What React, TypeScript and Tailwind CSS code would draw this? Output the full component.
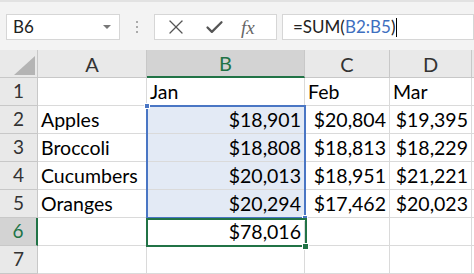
import { X, Check } from "lucide-react";

const cols = [
  { label: "A", w: "w-[109px]" },
  { label: "B", w: "w-[158px]", active: true },
  { label: "C", w: "w-[85px]" },
  { label: "D", w: "w-[82px]" },
  { label: "", w: "w-[10px]" },
];

const rows: { n: number; cells: string[] }[] = [
  { n: 1, cells: ["", "Jan", "Feb", "Mar", ""] },
  { n: 2, cells: ["Apples", "$18,901", "$20,804", "$19,395", ""] },
  { n: 3, cells: ["Broccoli", "$18,808", "$18,813", "$18,229", ""] },
  { n: 4, cells: ["Cucumbers", "$20,013", "$18,951", "$21,221", ""] },
  { n: 5, cells: ["Oranges", "$20,294", "$17,462", "$20,023", ""] },
  { n: 6, cells: ["", "$78,016", "", "", ""] },
  { n: 7, cells: ["", "", "", "", ""] },
];

function Cell({ text, w, selected }: { text: string; w: string; selected: boolean }) {
  const isNum = text.startsWith("$");
  return (
    <div
      className={`${w} h-[28px] shrink-0 border-r border-b border-[#dadada] flex items-center ${
        isNum ? "justify-end pr-[3px]" : "justify-start pl-[3px]"
      } ${selected ? "bg-[#e3eaf5]" : ""}`}
    >
      <span className="text-[19.5px] leading-[20px] text-black whitespace-nowrap">{text}</span>
    </div>
  );
}

export default function App() {
  return (
    <div
      className="w-[474px] h-[274px] overflow-hidden bg-[#f3f3f3] relative"
      style={{ fontFamily: "Lato, 'Open Sans', sans-serif" }}
    >
      {/* formula bar */}
      <div className="h-[50px] border-t-2 border-[#e2e2e2] flex items-start pt-[12px]">
        <div className="ml-[6px] w-[114px] h-[26px] bg-white border border-[#d6d6d6] flex items-center pl-[6px] pr-[8px] justify-between">
          <span className="text-[17px] text-[#222]">B6</span>
          <span className="w-0 h-0 border-l-[4px] border-r-[4px] border-t-[4px] border-l-transparent border-r-transparent border-t-[#777]" />
        </div>
        <div className="w-[34px] h-[26px] flex flex-col items-center justify-center gap-[3px]">
          <span className="w-[2px] h-[2px] bg-[#aaa]" />
          <span className="w-[2px] h-[2px] bg-[#aaa]" />
          <span className="w-[2px] h-[2px] bg-[#aaa]" />
        </div>
        <div className="w-[123px] h-[26px] bg-white border border-[#d6d6d6] flex items-center pl-[9px] gap-[16px]">
          <X size={24} strokeWidth={1.3} className="text-[#555]" />
          <Check size={21} strokeWidth={2.6} className="text-[#555]" />
          <span
            className="text-[19px] italic text-[#666] leading-none"
            style={{ fontFamily: "'Liberation Serif', serif" }}
          >
            fx
          </span>
        </div>
        <div className="ml-[5px] flex-1 h-[26px] bg-white border border-[#d6d6d6] flex items-center pl-[10px]">
          <span className="text-[17px] text-[#222]">=SUM(</span>
          <span className="text-[17px] text-[#3e6fc0]">B2:B5</span>
          <span className="text-[17px] text-[#222]">)</span>
          <span className="w-[1px] h-[19px] bg-black ml-[1px]" />
        </div>
      </div>

      {/* grid */}
      <div className="relative bg-white">
        <div className="flex h-[28px] bg-[#e9e9e9]">
          <div className="w-[38px] shrink-0 border-r border-b border-[#c8c8c8] relative">
            <svg className="absolute left-[14px] top-[6px]" width="21" height="19" viewBox="0 0 21 19">
              <polygon points="21,0 21,19 0,19" fill="#b4b4b4" />
            </svg>
          </div>
          {cols.map((c) => (
            <div
              key={c.label + c.w}
              className={`${c.w} shrink-0 flex items-center justify-center text-[20px] border-r ${
                c.active
                  ? "bg-[#d3d3d3] text-[#217346] border-b-2 border-b-[#217346] border-r-[#c8c8c8]"
                  : "text-[#333] border-b border-[#c8c8c8]"
              }`}
            >
              {c.label}
            </div>
          ))}
        </div>
        {rows.map((r) => (
          <div key={r.n} className="flex">
            <div
              className={`w-[38px] h-[28px] shrink-0 flex items-center justify-center text-[19px] border-b border-[#c8c8c8] ${
                r.n === 6
                  ? "bg-[#d3d3d3] text-[#217346] border-r-2 border-r-[#217346]"
                  : "bg-[#e9e9e9] text-[#333] border-r border-r-[#c8c8c8]"
              }`}
            >
              {r.n}
            </div>
            {r.cells.map((t, i) => (
              <Cell key={i} text={t} w={cols[i].w} selected={i === 1 && r.n >= 2 && r.n <= 5} />
            ))}
          </div>
        ))}

        {/* selection B2:B5 */}
        <div className="absolute left-[146px] top-[55px] w-[160px] h-[114px] border-2 border-[#4a76c4] pointer-events-none" />
        <div className="absolute left-[144px] top-[53px] w-[6px] h-[6px] bg-[#4a76c4] border border-white" />
        <div className="absolute left-[302px] top-[165px] w-[6px] h-[6px] bg-[#4a76c4] border border-white" />

        {/* active cell B6 */}
        <div className="absolute left-[146px] top-[168px] w-[161px] h-[29px] border-2 border-[#217346] pointer-events-none" />
        <div className="absolute left-[302px] top-[193px] w-[7px] h-[7px] bg-[#217346] border border-white" />
      </div>
    </div>
  );
}
